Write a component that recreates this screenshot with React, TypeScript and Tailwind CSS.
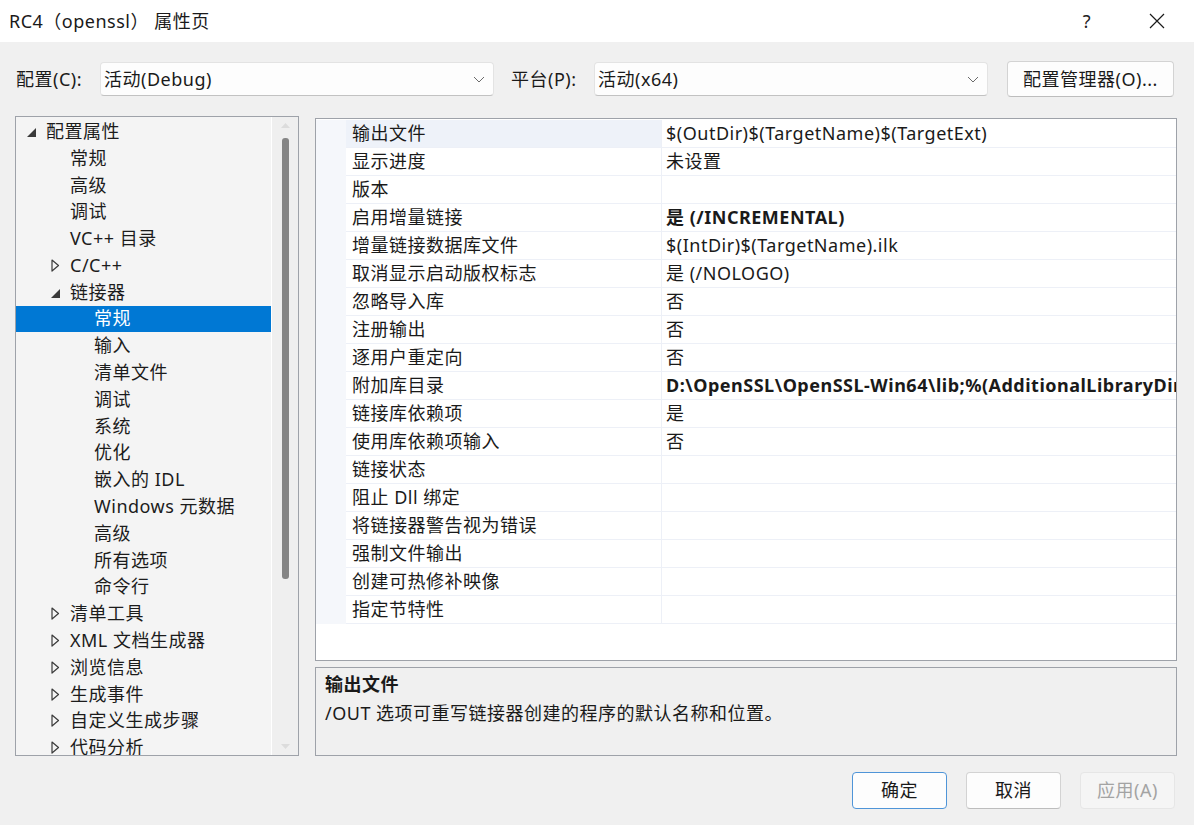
import React from "react";

type TreeItem = {
  label: string;
  level: number;
  state?: "open" | "closed";
  selected?: boolean;
};

const TREE: TreeItem[] = [
  { label: "配置属性", level: 0, state: "open" },
  { label: "常规", level: 1 },
  { label: "高级", level: 1 },
  { label: "调试", level: 1 },
  { label: "VC++ 目录", level: 1 },
  { label: "C/C++", level: 1, state: "closed" },
  { label: "链接器", level: 1, state: "open" },
  { label: "常规", level: 2, selected: true },
  { label: "输入", level: 2 },
  { label: "清单文件", level: 2 },
  { label: "调试", level: 2 },
  { label: "系统", level: 2 },
  { label: "优化", level: 2 },
  { label: "嵌入的 IDL", level: 2 },
  { label: "Windows 元数据", level: 2 },
  { label: "高级", level: 2 },
  { label: "所有选项", level: 2 },
  { label: "命令行", level: 2 },
  { label: "清单工具", level: 1, state: "closed" },
  { label: "XML 文档生成器", level: 1, state: "closed" },
  { label: "浏览信息", level: 1, state: "closed" },
  { label: "生成事件", level: 1, state: "closed" },
  { label: "自定义生成步骤", level: 1, state: "closed" },
  { label: "代码分析", level: 1, state: "closed" },
];

const LEVEL_PAD = ["pl-[10px]", "pl-[34px]", "pl-[58px]"];

type Prop = { name: string; value: string; bold?: boolean };

const PROPS: Prop[] = [
  { name: "输出文件", value: "$(OutDir)$(TargetName)$(TargetExt)" },
  { name: "显示进度", value: "未设置" },
  { name: "版本", value: "" },
  { name: "启用增量链接", value: "是 (/INCREMENTAL)", bold: true },
  { name: "增量链接数据库文件", value: "$(IntDir)$(TargetName).ilk" },
  { name: "取消显示启动版权标志", value: "是 (/NOLOGO)" },
  { name: "忽略导入库", value: "否" },
  { name: "注册输出", value: "否" },
  { name: "逐用户重定向", value: "否" },
  {
    name: "附加库目录",
    value: "D:\\OpenSSL\\OpenSSL-Win64\\lib;%(AdditionalLibraryDirectories)",
    bold: true,
  },
  { name: "链接库依赖项", value: "是" },
  { name: "使用库依赖项输入", value: "否" },
  { name: "链接状态", value: "" },
  { name: "阻止 Dll 绑定", value: "" },
  { name: "将链接器警告视为错误", value: "" },
  { name: "强制文件输出", value: "" },
  { name: "创建可热修补映像", value: "" },
  { name: "指定节特性", value: "" },
];

function Chevron() {
  return (
    <svg width="12" height="7" viewBox="0 0 12 7" className="shrink-0">
      <path d="M1 1L6 6L11 1" fill="none" stroke="#6b6b6b" strokeWidth="1" />
    </svg>
  );
}

function Combo({ value }: { value: string }) {
  return (
    <div className="flex h-[34px] w-[394px] items-center justify-between rounded-[4px] border border-[#e3e3e3] border-b-[#c2c2c2] bg-[#fdfdfd] pl-[3px] pr-[8px]">
      <span>{value}</span>
      <Chevron />
    </div>
  );
}

function Expander({ state }: { state?: "open" | "closed" }) {
  if (state === "open") {
    return (
      <svg width="9" height="9" viewBox="0 0 9 9" className="mt-[3px]">
        <path d="M9 0V9H0Z" fill="#3a3a3a" />
      </svg>
    );
  }
  if (state === "closed") {
    return (
      <svg width="9" height="13" viewBox="0 0 9 13">
        <path d="M1 1L7.5 6.5L1 12Z" fill="none" stroke="#3a3a3a" strokeWidth="1.2" strokeLinejoin="round" />
      </svg>
    );
  }
  return null;
}

function Tree() {
  return (
    <div className="flex h-[640px] w-[284px] shrink-0 overflow-hidden border border-[#9ea2a9] bg-[#f4f4f4]">
      <div className="w-[255px] shrink-0 overflow-hidden pt-[1px]">
        {TREE.map((item, i) => (
          <div
            key={i}
            className={`flex h-[26.8px] items-center whitespace-nowrap ${LEVEL_PAD[item.level]} ${
              item.selected ? "bg-[#0078d4] text-white" : "text-[#1c1c1c]"
            }`}
          >
            <div className="flex w-[20px] shrink-0 items-center pl-[1px]">
              <Expander state={item.state} />
            </div>
            <span>{item.label}</span>
          </div>
        ))}
      </div>
      <div className="w-[1px] shrink-0 bg-white" />
      <div className="flex flex-1 flex-col items-center bg-[#efefef] pt-[6px] pb-[6px]">
        <svg width="9" height="5" viewBox="0 0 9 5">
          <path d="M0 5L4.5 0L9 5Z" fill="#dcdcdc" />
        </svg>
        <div className="mt-[10px] h-[441px] w-[7px] rounded-[3px] bg-[#858585]" />
        <div className="flex-1" />
        <svg width="9" height="5" viewBox="0 0 9 5">
          <path d="M0 0L4.5 5L9 0Z" fill="#dcdcdc" />
        </svg>
      </div>
    </div>
  );
}

function PropGrid() {
  return (
    <div className="h-[543px] overflow-hidden border border-[#9ea2a9] bg-white pt-[1px]">
      {PROPS.map((p, i) => (
        <div key={i} className="flex h-[28px]">
          <div className="w-[30px] shrink-0 bg-[#f5f7fb]" />
          <div
            className={`flex w-[316px] shrink-0 items-center border-b border-r border-[#edf0f7] pl-[6px] whitespace-nowrap ${
              i === 0 ? "bg-[#eef2f9]" : ""
            }`}
          >
            {p.name}
          </div>
          <div
            className={`flex min-w-0 flex-1 items-center overflow-hidden border-b border-[#edf0f7] pl-[4px] whitespace-nowrap ${
              p.bold ? "font-bold" : ""
            }`}
          >
            {p.value}
          </div>
        </div>
      ))}
    </div>
  );
}

function Button({
  children,
  primary,
  disabled,
  className = "",
}: {
  children: React.ReactNode;
  primary?: boolean;
  disabled?: boolean;
  className?: string;
}) {
  return (
    <div
      className={`flex items-center justify-center rounded-[4px] border ${
        primary
          ? "border-[#4f95d8] bg-[#fdfdfd] text-[#1a1a1a]"
          : disabled
          ? "border-[#e6e6e6] bg-[#f5f5f5] text-[#a3a3a3]"
          : "border-[#d3d3d3] border-b-[#bdbdbd] bg-[#fdfdfd] text-[#1a1a1a]"
      } ${className}`}
    >
      {children}
    </div>
  );
}

export default function App() {
  return (
    <div className="flex h-[825px] w-[1194px] flex-col overflow-hidden bg-[#f0f0f0] font-['Noto_Sans','Noto_Sans_CJK_SC',sans-serif] text-[18px] tracking-[0.5px] text-[#1a1a1a]">
      {/* title bar */}
      <div className="flex h-[42px] shrink-0 items-center bg-white pl-[9px]">
        <span className="text-[18px]">RC4（openssl） 属性页</span>
        <div className="flex-1" />
        <span className="mr-[58px] text-[18px] text-[#222]">?</span>
        <svg width="16" height="16" viewBox="0 0 16 16" className="mr-[29px]">
          <path d="M1 1L15 15M15 1L1 15" stroke="#1a1a1a" strokeWidth="1.2" />
        </svg>
      </div>

      {/* configuration row */}
      <div className="mt-[19px] flex h-[36px] shrink-0 items-center pl-[16px]">
        <span className="w-[84px] shrink-0">配置(C):</span>
        <Combo value="活动(Debug)" />
        <span className="ml-[17px] w-[83px] shrink-0">平台(P):</span>
        <Combo value="活动(x64)" />
        <Button className="ml-[19px] h-[36px] w-[167px]">配置管理器(O)...</Button>
      </div>

      {/* main */}
      <div className="mt-[19px] flex shrink-0 gap-[16px] pl-[15px] pr-[17px]">
        <Tree />
        <div className="flex min-w-0 flex-1 flex-col pt-[2px]">
          <PropGrid />
          <div className="mt-[6px] h-[89px] border border-[#9ea2a9] bg-[#f0f0f0] pl-[9px] pt-[2px] leading-[29px]">
            <div className="font-bold">输出文件</div>
            <div>/OUT 选项可重写链接器创建的程序的默认名称和位置。</div>
          </div>
        </div>
      </div>

      {/* buttons */}
      <div className="mt-[16px] flex shrink-0 justify-end gap-[19px] pr-[19px]">
        <Button primary className="h-[37px] w-[95px]">
          确定
        </Button>
        <Button className="h-[37px] w-[95px]">取消</Button>
        <Button disabled className="h-[37px] w-[95px]">
          应用(A)
        </Button>
      </div>
    </div>
  );
}
